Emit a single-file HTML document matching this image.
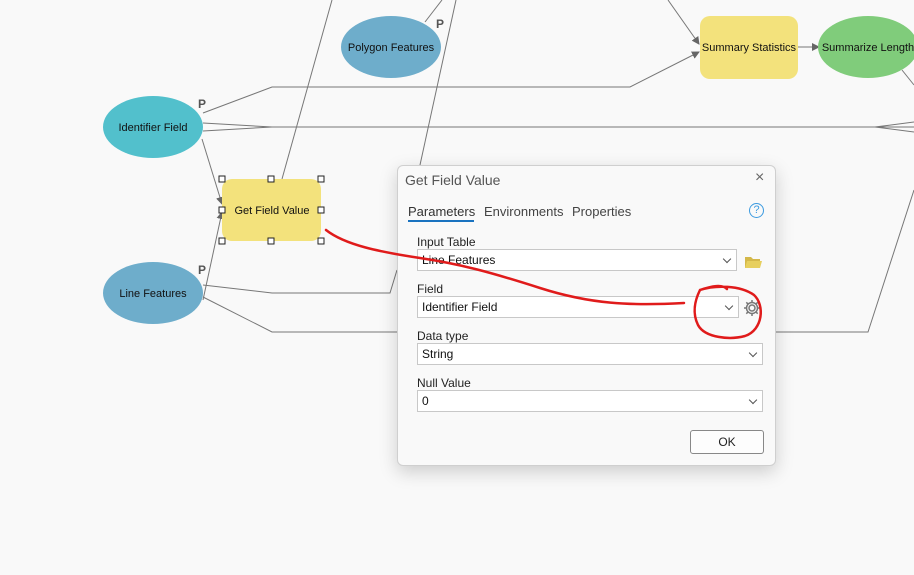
<!DOCTYPE html>
<html><head><meta charset="utf-8"><style>
body{margin:0;width:914px;height:575px;background:#f9f9f9;position:relative;overflow:hidden;font-family:"Liberation Sans",sans-serif}
svg.bg{position:absolute;left:0;top:0}
.dlg{position:absolute;left:397px;top:165px;width:377px;height:299px;background:#f9f9f9;border:1px solid #cfcfcf;border-radius:6px;box-shadow:0 6px 18px rgba(0,0,0,.18)}
.t{position:absolute;font-size:12px;color:#222;white-space:nowrap}
.sel{position:absolute;height:20px;background:#fff;border:1px solid #c8c8c8;font-size:12px;line-height:20px;padding-left:4px;box-sizing:content-box;color:#111}
.sel:after{content:"";position:absolute;right:6px;top:6px;width:5px;height:5px;border-right:1px solid #555;border-bottom:1px solid #555;transform:rotate(45deg)}
</style></head><body>
<svg class="bg" width="914" height="575">
<defs><marker id="a" markerWidth="8" markerHeight="8" refX="7" refY="4" orient="auto" markerUnits="userSpaceOnUse"><path d="M0,0L8,4L0,8z" fill="#666"/></marker></defs>
<g stroke="#777" stroke-width="1" fill="none">
<path d="M332,0L282,179"/>
<path d="M425,22L442,0"/>
<path d="M456,0L420,165"/>
<path d="M203,113L272,87L630,87L699,52" marker-end="url(#a)"/>
<path d="M203,123L272,127L914,127"/>
<path d="M203,131L272,127"/>
<path d="M875,127L914,122M875,127L914,132"/>
<path d="M202,139L222,204" marker-end="url(#a)"/>
<path d="M203,300L222,212" marker-end="url(#a)"/>
<path d="M203,285L272,293L390,293L397,270"/>
<path d="M203,297L272,332L397,332"/>
<path d="M775,332L868,332L914,190"/>
<path d="M668,0L699,44" marker-end="url(#a)"/>
<path d="M798,47L819,47" marker-end="url(#a)"/>
<path d="M902,70L914,85"/>
</g>
<ellipse cx="391" cy="47" rx="50" ry="31" fill="#6eadcb"/>
<ellipse cx="153" cy="127" rx="50" ry="31" fill="#52c0cc"/>
<ellipse cx="153" cy="293" rx="50" ry="31" fill="#6eadcb"/>
<ellipse cx="868" cy="47" rx="50" ry="31" fill="#80cc7b"/>
<rect x="222" y="179" width="99" height="62" rx="10" fill="#f3e27c"/>
<rect x="700" y="16" width="98" height="63" rx="10" fill="#f3e27c"/>
<g font-family="Liberation Sans" font-size="11" fill="#111" text-anchor="middle">
<text x="391" y="51">Polygon Features</text>
<text x="153" y="131">Identifier Field</text>
<text x="153" y="297">Line Features</text>
<text x="272" y="214">Get Field Value</text>
<text x="749" y="51">Summary Statistics</text>
<text x="868" y="51">Summarize Length</text>
</g>
<g font-family="Liberation Sans" font-size="12" font-weight="bold" fill="#555">
<text x="198" y="108">P</text><text x="198" y="274">P</text><text x="436" y="28">P</text>
</g>
<g fill="#fff" stroke="#222" stroke-width="1">
<rect x="219" y="176" width="6" height="6"/><rect x="268" y="176" width="6" height="6"/><rect x="318" y="176" width="6" height="6"/>
<rect x="219" y="207" width="6" height="6"/><rect x="318" y="207" width="6" height="6"/>
<rect x="219" y="238" width="6" height="6"/><rect x="268" y="238" width="6" height="6"/><rect x="318" y="238" width="6" height="6"/>
</g>
</svg>
<div class="dlg">
<div class="t" style="left:7px;top:6px;font-size:14px;color:#555">Get Field Value</div>
<div class="t" style="left:357px;top:3px;font-size:16px;color:#666">×</div>
<div class="t" style="left:10px;top:38px;font-size:13px;color:#333">Parameters</div>
<div style="position:absolute;left:10px;top:54px;width:66px;height:2px;background:#1a73c0"></div>
<div class="t" style="left:86px;top:38px;font-size:13px;color:#444">Environments</div>
<div class="t" style="left:174px;top:38px;font-size:13px;color:#444">Properties</div>
<div style="position:absolute;left:351px;top:37px;width:13px;height:13px;border:1.5px solid #3d9be0;border-radius:50%;color:#3d9be0;font-size:11px;line-height:13px;text-align:center">?</div>
<div class="t" style="left:19px;top:69px">Input Table</div>
<div class="sel" style="left:19px;top:83px;width:314px">Line Features</div>
<svg style="position:absolute;left:347px;top:89px" width="17" height="13"><path d="M0,2h6l2,2h7v9H0z" fill="#d4b84a"/><path d="M2,6h15l-2,7H0z" fill="#e7cf5e"/></svg>
<div class="t" style="left:19px;top:116px">Field</div>
<div class="sel" style="left:19px;top:130px;width:316px">Identifier Field</div>
<svg style="position:absolute;left:345px;top:133px" width="18" height="18" viewBox="-9 -9 18 18"><g fill="none" stroke="#777" stroke-width="1.5"><circle r="3"/><circle r="5.5"/><path d="M0,-8V-5.5M0,8V5.5M-8,0H-5.5M8,0H5.5M-5.7,-5.7L-3.9,-3.9M5.7,5.7L3.9,3.9M-5.7,5.7L-3.9,3.9M5.7,-5.7L3.9,-3.9"/></g></svg>
<div class="t" style="left:19px;top:163px">Data type</div>
<div class="sel" style="left:19px;top:177px;width:340px">String</div>
<div class="t" style="left:19px;top:210px">Null Value</div>
<div class="sel" style="left:19px;top:224px;width:340px">0</div>
<div style="position:absolute;left:292px;top:264px;width:72px;height:22px;border:1px solid #888;border-radius:3px;background:#fdfdfd;font-size:12px;line-height:22px;text-align:center;color:#222">OK</div>
</div>
<svg class="bg" width="914" height="575"><g fill="none" stroke="#e01b1b" stroke-width="2.5" stroke-linecap="round">
<path d="M326,230C345,245 380,252 420,258C460,264 490,272 540,288C590,304 630,306 684,303"/>
<path d="M700,290C712,286 722,284 727,289M700,290C715,285 740,285 754,295C765,305 763,330 745,336C730,340 705,338 698,325C692,313 695,300 700,290"/>
</g></svg>
</body></html>
